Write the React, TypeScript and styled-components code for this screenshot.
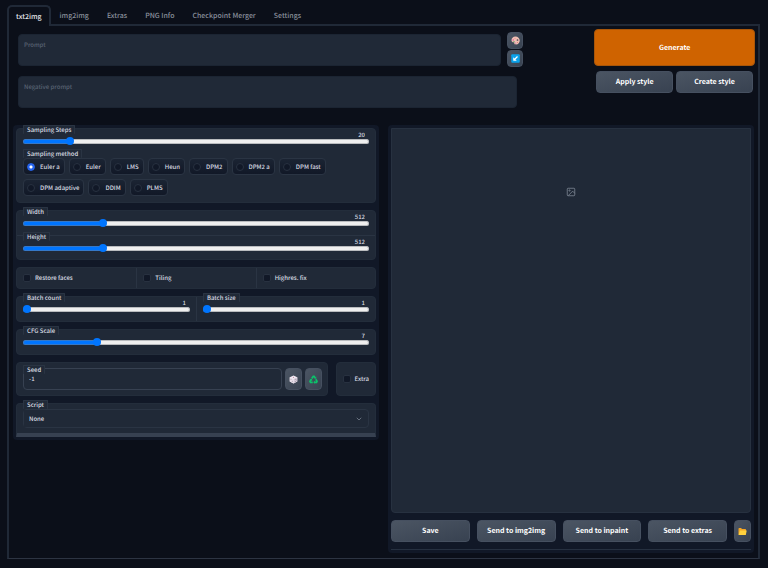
import React, { useId, useState } from "react";
import styled, { createGlobalStyle, css } from "styled-components";

const c = {
  page: "#0b0f19",
  panel: "#111827",
  block: "#202937",
  line: "#2a3443",
  edge: "#374151",
  text: "#d8dce2",
  muted: "#8a909c",
  faint: "#586272",
  blue: "#0075ff",
};

const GlobalStyle = createGlobalStyle`
  *, *::before, *::after { box-sizing: border-box; }
  body {
    margin: 0;
    background: ${c.page};
    color: ${c.text};
    font: 500 6px/10px "Noto Sans CJK SC", "Open Sans", sans-serif;
    text-rendering: geometricPrecision;
  }
  button, input, select, textarea { font: inherit; color: inherit; margin: 0; text-rendering: inherit; }
  svg { display: block; }
`;

const Page = styled.main`
  padding: 5px 8px 9px 7px;
`;

const TabBar = styled.nav`
  display: flex;
  position: relative;
  margin-bottom: -2px;
`;

const Tab = styled.button<{ $active?: boolean }>`
  height: 21px;
  padding: 0 9px;
  border: 0 solid ${c.block};
  background: none;
  color: ${c.muted};
  font-size: 7px;
  cursor: pointer;
  ${(p) =>
    p.$active &&
    css`
      padding: 0 7px;
      border-width: 2px 2px 0;
      border-radius: 5px 5px 0 0;
      background: ${c.page};
      color: #e5e7eb;
    `}
`;

const TabPanel = styled.section`
  padding: 3px 3px 5px 4px;
  border: 2px solid ${c.block};
  border-bottom: 1px solid #2d3442;
`;

const TopRow = styled.div`
  display: grid;
  grid-template-columns: 22fr 7fr;
  column-gap: 71px;
  padding-left: 5px;
  margin-bottom: 17px;
`;

const Prompts = styled.div`
  display: flex;
  flex-direction: column;
  gap: 9px;
  padding-top: 3px;
`;

const PromptRow = styled.div`
  display: flex;
  align-items: center;
  gap: 6px;
`;

const PromptBox = styled.textarea<{ $inset?: boolean }>`
  flex: 1;
  min-width: 0;
  height: 32px;
  margin-right: ${(p) => (p.$inset ? 6 : 0)}px;
  padding: 5px;
  border: 1px solid #1b2432;
  border-radius: 4px;
  background: ${c.block};
  resize: none;
  outline: none;
  &::placeholder { color: ${c.faint}; opacity: 1; }
`;

const ToolColumn = styled.div`
  display: flex;
  flex-direction: column;
  gap: 1px;
`;

const Button = styled.button`
  display: flex;
  align-items: center;
  justify-content: center;
  flex: 1;
  min-width: 0;
  height: 22px;
  padding: 0;
  border: 1px solid #465060;
  border-radius: 4px;
  background: linear-gradient(to bottom right, #4b5563, #384251);
  color: #fff;
  font-size: 7px;
  font-weight: 700;
  white-space: nowrap;
  cursor: pointer;
`;

const IconButton = styled(Button)<{ $small?: boolean }>`
  flex: none;
  width: ${(p) => (p.$small ? 16 : 17)}px;
  height: ${(p) => (p.$small ? 17 : 22)}px;
`;

const Actions = styled.div`
  display: flex;
  flex-direction: column;
  gap: 5px;
`;

const GenerateButton = styled(Button)`
  flex: none;
  height: 37px;
  border-color: #a8560a;
  background: #cf6300;
`;

const StyleButtons = styled.div`
  display: flex;
  gap: 3px;
  padding: 0 2px;
`;

const Columns = styled.div`
  display: grid;
  grid-template-columns: minmax(0, 1fr) minmax(0, 1fr);
  align-items: start;
  column-gap: 9px;
  padding-right: 1px;
`;

const Column = styled.div`
  display: flex;
  flex-direction: column;
  gap: 7px;
  padding: 3px;
  border-radius: 4px;
  background: ${c.panel};
`;

const Block = styled.div`
  border: 1px solid #232d3b;
  border-radius: 4px;
  background: ${c.block};
`;

const SplitBlock = styled(Block)`
  display: grid;
  grid-auto-flow: column;
  grid-auto-columns: minmax(0, 1fr);
  > * + * { border-left: 1px solid ${c.line}; }
`;

const StackBlock = styled(Block)`
  > * + * { border-top: 1px solid ${c.line}; }
`;

const Field = styled.div`
  height: 24px;
  padding: 0 6px;
`;

const FieldHead = styled.div`
  display: flex;
  justify-content: space-between;
  align-items: flex-start;
  height: 8px;
`;

const chip = css`
  position: relative;
  width: max-content;
  height: 9px;
  margin-top: -4px;
  padding: 0 3px;
  border: 1px solid ${c.line};
  border-bottom: 0;
  border-radius: 1px;
  background: ${c.block};
  line-height: 8px;
`;

const Chip = styled.label`
  ${chip}
`;

const GroupChip = styled.legend`
  ${chip}
  float: left;
`;

const NumberBox = styled.input`
  width: 40px;
  height: 11px;
  padding: 0 4px 0 0;
  border: 0;
  background: none;
  text-align: right;
  outline: none;
  appearance: textfield;
  &::-webkit-inner-spin-button { appearance: none; }
`;

const Range = styled.input`
  display: block;
  width: 100%;
  height: 9px;
  appearance: none;
  background: none;
  cursor: pointer;
  &::-webkit-slider-runnable-track {
    height: 5px;
    border-radius: 3px;
    box-shadow: inset 0 0 0 1px rgba(120, 125, 130, 0.45);
    background: linear-gradient(
      to right,
      ${c.blue} calc(4px + (100% - 8px) * var(--fill)),
      #efefef calc(4px + (100% - 8px) * var(--fill))
    );
  }
  &::-webkit-slider-thumb {
    appearance: none;
    width: 8px;
    height: 8px;
    margin-top: -2px;
    border-radius: 50%;
    background: ${c.blue};
  }
`;

const RadioGroup = styled.fieldset`
  min-width: 0;
  height: 49px;
  margin: 0;
  padding: 0 6px;
  border: 0;
`;

const RadioList = styled.div`
  display: flex;
  flex-wrap: wrap;
  gap: 4px;
  clear: both;
`;

const RadioPill = styled.label`
  display: flex;
  align-items: center;
  gap: 5px;
  height: 17px;
  padding: 0 4px 0 3px;
  border: 1px solid ${c.line};
  border-radius: 4px;
  background: linear-gradient(#1b2433, #111827);
  cursor: pointer;
`;

const tick = css`
  flex: none;
  width: 8px;
  height: 8px;
  appearance: none;
  border: 1px solid #283140;
  background: ${c.panel};
  cursor: pointer;
`;

const Radio = styled.input`
  ${tick}
  border-radius: 50%;
  &:checked {
    border-color: #2563eb;
    background: radial-gradient(circle, #fff 0 1px, #2563eb 2px);
  }
`;

const Checkbox = styled.input`
  ${tick}
  border-radius: 2px;
  &:checked { background: #2563eb; }
`;

const CheckLabel = styled.label<{ $tall?: boolean }>`
  display: flex;
  align-items: center;
  gap: 4px;
  height: ${(p) => (p.$tall ? 32 : 20)}px;
  padding: 0 6px;
  cursor: pointer;
`;

const SeedRow = styled.div`
  display: flex;
  gap: 8px;
`;

const SeedBlock = styled(Block)`
  display: flex;
  flex: 1;
  gap: 3px;
  padding: 5px;
  padding-left: 6px;
`;

const SeedField = styled.div`
  flex: 1;
  height: 22px;
  border: 1px solid ${c.edge};
  border-radius: 4px;
`;

const SeedChip = styled(Chip)`
  display: block;
  margin-left: -1px;
`;

const SeedInput = styled.input`
  display: block;
  width: 100%;
  height: 10px;
  padding: 0 5px;
  border: 0;
  background: none;
  outline: none;
`;

const ScriptBlock = styled(Block)`
  padding: 0;
  border-bottom: 4px solid ${c.edge};
  border-radius: 4px 4px 0 0;
`;

const ScriptField = styled.div`
  display: flex;
  flex-direction: column;
  height: 29px;
  padding: 0 6px 5px;
`;

const SelectFrame = styled.div`
  display: flex;
  align-items: center;
  height: 19px;
  padding-right: 6px;
  border: 1px solid ${c.line};
  border-radius: 4px;
`;

const Select = styled.select`
  flex: 1;
  height: 17px;
  padding: 0 5px;
  border: 0;
  appearance: none;
  background: ${c.block};
  outline: none;
`;

const Gallery = styled.div`
  display: flex;
  justify-content: center;
  height: 385px;
  padding-top: 58px;
  border: 1px solid #273140;
  border-radius: 0 0 4px 4px;
  background: ${c.block};
  color: #7b8491;
`;

const OutputButtons = styled.div`
  display: flex;
  gap: 7px;
`;

const Rule = styled.hr`
  width: 100%;
  height: 1px;
  margin: 0;
  border: 0;
  background: #263040;
`;

const PaletteIcon = () => (
  <svg width="9" height="9" viewBox="0 0 18 18">
    <path d="M9 1C4 1 1 4.500 1 8.500c0 3 2 4 4 4 1.500 0 1.500 1 1.500 2.200C6.500 16.500 8 17 10 17c4.500 0 7.500-3.500 7.500-8S13.500 1 9 1z" fill="#f1c0b4" />
    <circle cx="4.500" cy="8" r="1.500" fill="#e0559b" />
    <circle cx="8" cy="4.500" r="1.200" fill="#e8818a" />
    <circle cx="9.500" cy="14" r="1.200" fill="#c86fb5" />
    <circle cx="6" cy="11.500" r="1.300" fill="#63a35c" />
    <circle cx="13" cy="8" r="1.700" fill="#4a4653" />
    <circle cx="13" cy="13" r="1" fill="#dc776e" />
  </svg>
);

const ArrowIcon = () => (
  <svg width="9" height="9" viewBox="0 0 18 18">
    <rect x="0.500" y="0.500" width="17" height="17" rx="2" fill="#0aa2ea" />
    <path d="M13 5L7 11" stroke="#fff" strokeWidth="2.600" />
    <path d="M4.500 6.500v7h7z" fill="#fff" />
  </svg>
);

const DiceIcon = () => (
  <svg width="9" height="9" viewBox="0 0 18 18">
    <path d="M9 1l7.500 3.500v8.500L9 17l-7.500-4V4.500z" fill="#f1ebf3" />
    <path d="M9 8l7.500-3.500v8.500L9 17z" fill="#d6cbd9" />
    <path d="M9 8L1.500 4.500v8.500L9 17z" fill="#e8dfe9" />
    <circle cx="9" cy="4.500" r="1.200" fill="#b0708e" />
    <circle cx="4" cy="8.500" r="0.900" fill="#7d7486" />
    <circle cx="6.500" cy="12.500" r="0.900" fill="#7d7486" />
    <circle cx="12.500" cy="8.500" r="0.900" fill="#7d7486" />
    <circle cx="12.500" cy="13" r="0.900" fill="#7d7486" />
    <circle cx="15" cy="10" r="0.800" fill="#7d7486" />
  </svg>
);

const RecycleIcon = () => (
  <svg width="9" height="9" viewBox="0 0 18 18" fill="none" stroke="#0bc46a" strokeWidth="3.400">
    <path d="M5.500 7L8.500 2.800h1.800L12 5.500" />
    <path d="M13.500 8.500l2.500 4.200-1 2H11" />
    <path d="M7.500 14.800H3l-1-2 1.800-3" />
    <path d="M10 7l4.500.5L14.500 3z M12 11.500v6L8.500 14.600z M1 9l4.800-1.500L6.500 12z" fill="#0bc46a" stroke="none" />
  </svg>
);

const FolderIcon = () => (
  <svg width="9" height="9" viewBox="0 0 18 18">
    <path d="M1 3.500Q1 2 2.500 2H6l2 2h6.500Q16 4 16 5.500V15H1z" fill="#f5a623" />
    <path d="M4 7h13.500L15.500 16H1z" fill="#ffd23e" />
  </svg>
);

const ImageIcon = () => (
  <svg width="10" height="10" viewBox="0 0 24 24" fill="none" stroke="currentColor" strokeWidth="2" strokeLinejoin="round">
    <rect x="3" y="3" width="18" height="18" rx="2" />
    <circle cx="8.500" cy="8.500" r="1.500" />
    <path d="M21 15l-5-5L5 21" />
  </svg>
);

const ChevronIcon = () => (
  <svg width="6" height="6" viewBox="0 0 12 12" fill="none" stroke="#7a8391" strokeWidth="1.600">
    <path d="M1.500 3.500L6 8l4.500-4.500" />
  </svg>
);

type SliderProps = { label: string; min: number; max: number; initial: number; step?: number };

function Slider({ label, min, max, initial, step = 1 }: SliderProps) {
  const id = useId();
  const [value, setValue] = useState(initial);
  const change = (e: React.ChangeEvent<HTMLInputElement>) => setValue(Number(e.target.value));
  const fill = { "--fill": (value - min) / (max - min) } as React.CSSProperties;
  return (
    <Field>
      <FieldHead>
        <Chip htmlFor={id}>{label}</Chip>
        <NumberBox type="number" aria-label={`${label} value`} value={value} min={min} max={max} onChange={change} />
      </FieldHead>
      <Range id={id} type="range" min={min} max={max} step={step} value={value} onChange={change} style={fill} />
    </Field>
  );
}

const tabs = ["txt2img", "img2img", "Extras", "PNG Info", "Checkpoint Merger", "Settings"];
const samplers = ["Euler a", "Euler", "LMS", "Heun", "DPM2", "DPM2 a", "DPM fast", "DPM adaptive", "DDIM", "PLMS"];
const options = ["Restore faces", "Tiling", "Highres. fix"];
const outputs = ["Save", "Send to img2img", "Send to inpaint", "Send to extras"];

export default function App() {
  const [sampler, setSampler] = useState("Euler a");
  return (
    <>
      <GlobalStyle />
      <Page>
        <TabBar>
          {tabs.map((name, i) => (
            <Tab key={name} type="button" $active={i === 0}>{name}</Tab>
          ))}
        </TabBar>
        <TabPanel>
          <TopRow>
            <Prompts>
              <PromptRow>
                <PromptBox aria-label="Prompt" placeholder="Prompt" />
                <ToolColumn>
                  <IconButton $small type="button" aria-label="Random artist"><PaletteIcon /></IconButton>
                  <IconButton $small type="button" aria-label="Read parameters"><ArrowIcon /></IconButton>
                </ToolColumn>
              </PromptRow>
              <PromptRow>
                <PromptBox $inset aria-label="Negative prompt" placeholder="Negative prompt" />
              </PromptRow>
            </Prompts>
            <Actions>
              <GenerateButton type="button">Generate</GenerateButton>
              <StyleButtons>
                <Button type="button">Apply style</Button>
                <Button type="button">Create style</Button>
              </StyleButtons>
            </Actions>
          </TopRow>
          <Columns>
            <Column>
              <StackBlock>
                <Slider label="Sampling Steps" min={1} max={150} initial={20} />
                <RadioGroup>
                  <GroupChip>Sampling method</GroupChip>
                  <RadioList>
                    {samplers.map((name) => (
                      <RadioPill key={name}>
                        <Radio type="radio" name="sampler" checked={sampler === name} onChange={() => setSampler(name)} />
                        {name}
                      </RadioPill>
                    ))}
                  </RadioList>
                </RadioGroup>
              </StackBlock>
              <StackBlock>
                <Slider label="Width" min={64} max={2048} step={64} initial={512} />
                <Slider label="Height" min={64} max={2048} step={64} initial={512} />
              </StackBlock>
              <SplitBlock>
                {options.map((name) => (
                  <CheckLabel key={name}>
                    <Checkbox type="checkbox" />
                    {name}
                  </CheckLabel>
                ))}
              </SplitBlock>
              <SplitBlock>
                <Slider label="Batch count" min={1} max={16} initial={1} />
                <Slider label="Batch size" min={1} max={8} initial={1} />
              </SplitBlock>
              <Block>
                <Slider label="CFG Scale" min={1} max={30} initial={7} />
              </Block>
              <SeedRow>
                <SeedBlock>
                  <SeedField>
                    <SeedChip htmlFor="seed">Seed</SeedChip>
                    <SeedInput id="seed" defaultValue="-1" />
                  </SeedField>
                  <IconButton type="button" aria-label="Random seed"><DiceIcon /></IconButton>
                  <IconButton type="button" aria-label="Reuse seed"><RecycleIcon /></IconButton>
                </SeedBlock>
                <Block>
                  <CheckLabel $tall>
                    <Checkbox type="checkbox" />
                    Extra
                  </CheckLabel>
                </Block>
              </SeedRow>
              <ScriptBlock>
                <ScriptField>
                  <Chip htmlFor="script">Script</Chip>
                  <SelectFrame>
                    <Select id="script" defaultValue="None">
                      <option>None</option>
                    </Select>
                    <ChevronIcon />
                  </SelectFrame>
                </ScriptField>
              </ScriptBlock>
            </Column>
            <Column>
              <Gallery><ImageIcon /></Gallery>
              <OutputButtons>
                {outputs.map((name) => (
                  <Button key={name} type="button">{name}</Button>
                ))}
                <IconButton type="button" aria-label="Open folder"><FolderIcon /></IconButton>
              </OutputButtons>
              <Rule />
            </Column>
          </Columns>
        </TabPanel>
      </Page>
    </>
  );
}
